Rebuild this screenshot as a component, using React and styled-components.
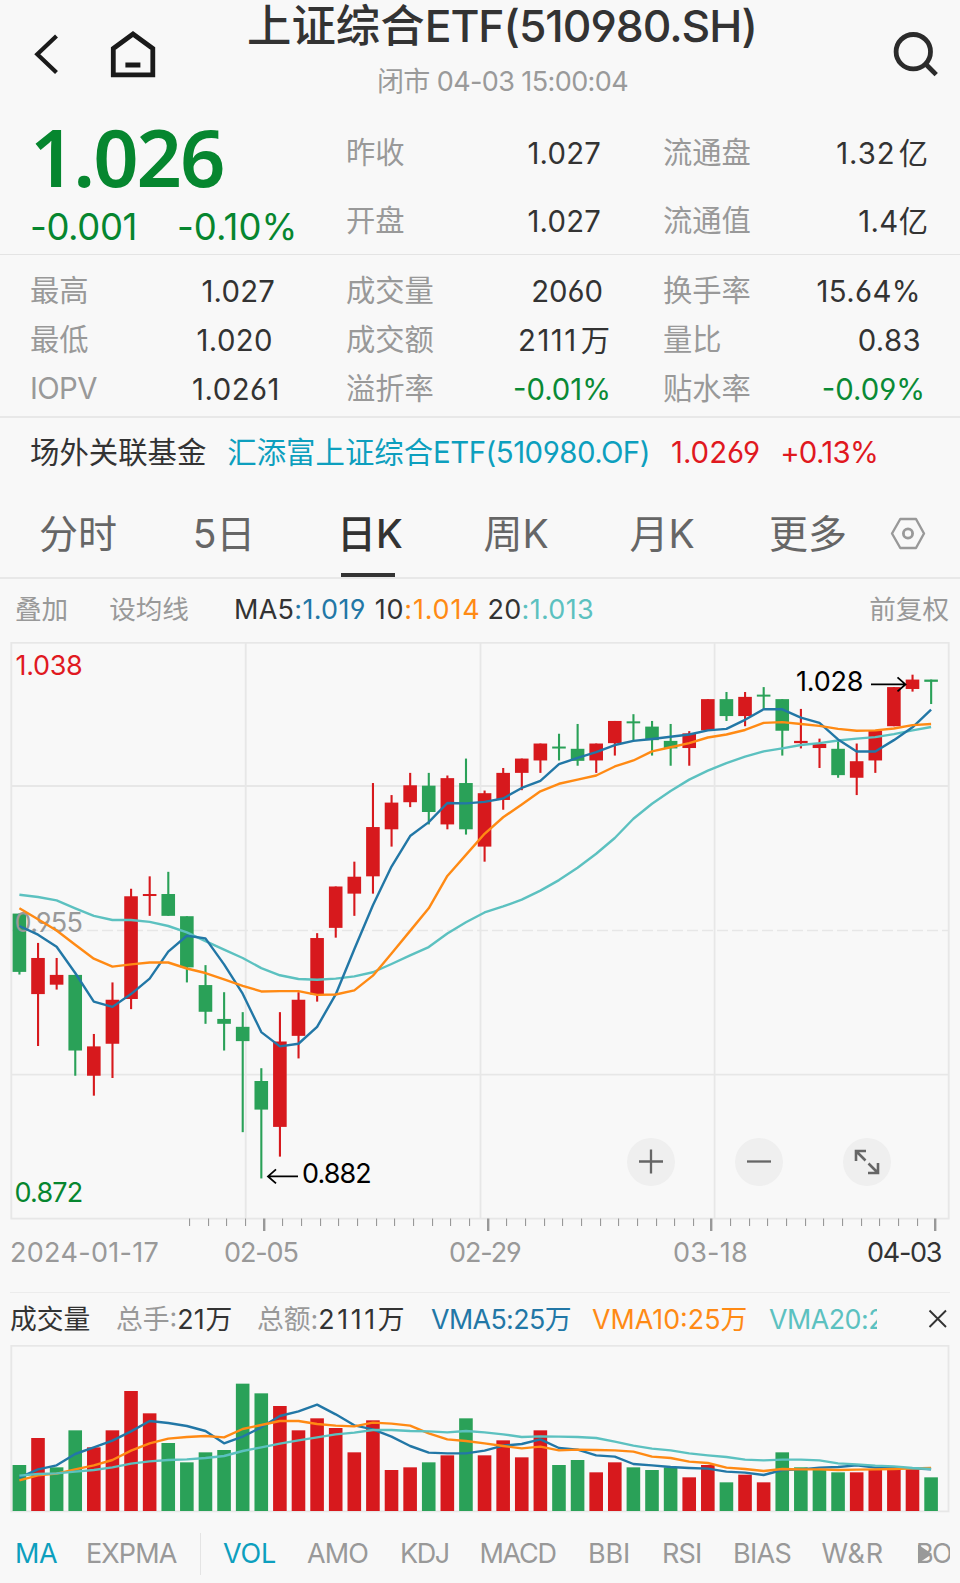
import React from "react";
import styled, { createGlobalStyle } from "styled-components";

const GlobalStyle = createGlobalStyle`
  body {
    margin: 0;
    background: #f8f8f8;
  }
`;

const RED = "#d7191d";
const GREEN = "#2aa158";
const BLUE = "#2277a6";
const ORANGE = "#ff8a14";
const CYAN = "#5cc1c0";

const Page = styled.div`
  width: 960px;
  height: 1583px;
  overflow: hidden;
  display: flex;
  flex-direction: column;
  background: #f8f8f8;
  color: #333;
  font-family: Inter, "Noto Sans CJK SC", sans-serif;
  font-feature-settings: "cv03", "cv04";
  white-space: nowrap;
`;

const Latin = styled.span`
  letter-spacing: ${(p) => p.$ls || 0}px;
  margin-right: ${(p) => p.$gap || 0}px;
  color: ${(p) => p.$color || "inherit"};
`;

/* header */
const Header = styled.header`
  height: 118px;
  flex: none;
  display: grid;
  grid-template-columns: 168px 1fr 128px;
`;

const HeaderLeft = styled.div`
  display: flex;
  gap: 49px;
  padding: 29px 0 0 33px;
`;

const HeaderRight = styled.div`
  padding: 28px 0 0 58px;
`;

const Titles = styled.div`
  display: flex;
  flex-direction: column;
  align-items: center;
`;

const Title = styled.h1`
  margin: 0 0 0 4px;
  font-size: 44.4px;
  font-weight: 500;
  line-height: 52px;
`;

const Subtitle = styled.div`
  margin-left: 5px;
  color: #9a9a9a;
  font-size: 27px;
  line-height: 60px;
  letter-spacing: -0.6px;
`;

/* quote */
const Quote = styled.section`
  height: 136px;
  flex: none;
  display: grid;
  grid-template-columns: 346px 317px 1fr;
  border-bottom: 1px solid #e4e4e4;
`;

const PriceBox = styled.div`
  color: #06862f;
  padding-left: 30px;
`;

const Price = styled.div`
  height: 81px;
  font-family: "Noto Sans", sans-serif;
  font-size: 79.5px;
  font-weight: 600;
  line-height: 76px;
  letter-spacing: -2.1px;
`;

const Change = styled.div`
  display: flex;
  gap: 40px;
  font-size: 36.5px;
  line-height: 56px;
`;

const QuoteColumn = styled.div`
  padding-top: 1px;
`;

const Stats = styled.section`
  height: 150px;
  flex: none;
  padding-top: 11px;
  display: grid;
  grid-template-columns: 316px 317px 1fr;
  align-content: start;
  padding-left: 30px;
  border-bottom: 2px solid #e8e8e8;
`;

const Cell = styled.div`
  height: ${(p) => p.$h || 49}px;
  line-height: ${(p) => p.$h || 49}px;
  display: flex;
  justify-content: space-between;
  padding-right: ${(p) => p.$end}px;
  font-size: 29.3px;
`;

const Label = styled.span`
  color: #999;
`;

const Value = styled.span`
  color: ${(p) => (p.$down ? "#0a8a35" : "#333")};
  padding-top: 1px;
`;

/* linked fund */
const Fund = styled.section`
  height: 70px;
  flex: none;
  display: flex;
  padding-left: 30px;
  font-size: 29.4px;
  line-height: 70px;
`;

const FundName = styled.span`
  color: #0d9fbe;
  margin: 0 21px 0 21px;
`;

const FundValue = styled.span`
  color: #e0191f;
  margin-right: 20px;
`;

/* period tabs */
const Tabs = styled.nav`
  height: 89px;
  flex: none;
  display: flex;
  padding: 0 0 0 5px;
  border-bottom: 2px solid #e8e8e8;
`;

const Tab = styled.div`
  width: 146px;
  height: 89px;
  box-sizing: border-box;
  padding-top: 3px;
  display: flex;
  flex-direction: column;
  align-items: center;
  justify-content: space-between;
  font-size: 39px;
  line-height: 86px;
  color: ${(p) => (p.$active ? "#333" : "#666")};
  font-weight: ${(p) => (p.$active ? 500 : 400)};
`;

const TabLine = styled.i`
  width: 54px;
  height: 4px;
  flex: none;
  margin: -4px 4px 0 0;
  background: #333;
`;

const TabSettings = styled.div`
  padding: 29px 0 0 9px;
`;

/* moving average bar */
const MaBar = styled.div`
  height: 63px;
  flex: none;
  display: flex;
  padding: 0 11px 0 15px;
  font-size: 26.6px;
  line-height: 61px;
`;

const MaTool = styled.span`
  color: #999;
  margin-right: ${(p) => p.$gap || 0}px;
`;

const MaValue = styled.span`
  margin-right: ${(p) => p.$gap || 0}px;
  font-size: 27px;
`;

const Push = styled.span`
  flex: 1;
`;

/* charts */
const ChartBox = styled.div`
  position: relative;
  height: 590px;
  flex: none;

  svg {
    display: block;
  }
`;

const ZoomButtons = styled.div`
  position: absolute;
  left: 626.5px;
  top: 496px;
  display: flex;
  gap: 60.4px;
`;

const ZoomButton = styled.button`
  width: 48px;
  height: 48px;
  padding: 0;
  border: 0;
  border-radius: 50%;
  background: #efefef;
  display: flex;
  align-items: center;
  justify-content: center;
`;

const Dates = styled.div`
  height: 60px;
  flex: none;
  display: flex;
  padding-left: 10px;
  font-size: 27px;
  line-height: 41px;
  color: #999;
`;

const DateLabel = styled.span`
  width: ${(p) => p.$w}px;
  letter-spacing: ${(p) => p.$ls}px;
  color: ${(p) => (p.$active ? "#333" : "inherit")};
`;

const VolumeHead = styled.div`
  height: 52px;
  flex: none;
  margin: 0 10px;
  border-top: 1px solid #ececec;
  display: flex;
  align-items: center;
  justify-content: space-between;
  font-size: 26.8px;
  line-height: 54px;
`;

const VolumeTexts = styled.div`
  display: flex;
  width: 867px;
  overflow: hidden;
`;

const VolumeText = styled.span`
  flex: none;
  width: ${(p) => p.$w}px;
  color: ${(p) => p.$color || "#333"};
`;

const VolumeBox = styled.div`
  height: 168px;
  flex: none;

  svg {
    display: block;
  }
`;

/* indicator picker */
const Indicators = styled.nav`
  height: 60px;
  flex: none;
  margin-right: 10px;
  padding: 10px 0 0 15px;
  display: flex;
  overflow: hidden;
  font-size: 27px;
  line-height: 62px;
`;

const Indicator = styled.span`
  flex: none;
  width: ${(p) => p.$w}px;
  letter-spacing: ${(p) => p.$ls}px;
  color: ${(p) => (p.$active ? "#0d9fbe" : "#999")};
`;

const IndicatorDivider = styled.i`
  flex: none;
  width: 1px;
  height: 42px;
  margin: 10px 22px 0 0;
  background: #e4e4e4;
`;

const MoreIndicators = styled.span`
  flex: none;
  width: 40px;
  display: flex;
  color: #999;
  letter-spacing: -1.6px;

  svg {
    flex: none;
    margin: 21px -18px 0 2.5px;
  }
`;

// x position of the n-th trading day
const dayX = (i) => 19.4 + i * 18.606;
const priceY = (v) => 0.7 + ((v - 7) * 576) / 1531;

// [up, body top, body bottom, high, low]
const CANDLES = [
  [0, 727, 882, 727, 889], [1, 845, 941, 805, 1079], [1, 890, 916, 845, 929], [0, 890, 1091, 890, 1158],
  [1, 1080, 1158, 1047, 1211], [1, 956, 1073, 910, 1164], [1, 681, 954, 661, 981], [1, 675, 680, 628, 733],
  [0, 675, 733, 616, 733], [0, 734, 870, 734, 910], [0, 917, 988, 864, 1020], [0, 1007, 1020, 936, 1091],
  [0, 1028, 1066, 989, 1308], [0, 1172, 1248, 1138, 1431], [1, 1067, 1294, 989, 1373], [1, 956, 1052, 936, 1112],
  [1, 792, 942, 779, 961], [1, 655, 765, 655, 791], [1, 629, 674, 589, 733], [1, 497, 628, 380, 674],
  [1, 432, 503, 412, 549], [1, 386, 431, 353, 444], [0, 387, 457, 353, 490], [1, 367, 490, 360, 503],
  [0, 380, 503, 315, 517], [1, 407, 549, 400, 589], [1, 353, 425, 340, 451], [1, 315, 353, 315, 399],
  [1, 275, 320, 275, 353], [0, 283, 288, 249, 320], [0, 289, 321, 223, 334], [1, 275, 320, 275, 353],
  [1, 215, 274, 215, 307], [0, 216, 221, 197, 266], [0, 230, 266, 215, 307], [0, 268, 288, 223, 334],
  [1, 248, 287, 242, 334], [1, 157, 240, 157, 240], [0, 157, 202, 138, 215], [1, 151, 202, 138, 229],
  [0, 145, 150, 125, 183], [0, 157, 241, 157, 307], [1, 268, 274, 183, 288], [1, 276, 287, 262, 340],
  [0, 289, 359, 268, 366], [1, 322, 366, 275, 412], [1, 241, 320, 241, 353], [1, 125, 229, 125, 229],
  [1, 105, 130, 92, 137], [0, 105, 111, 105, 170],
];

const MA5 = [
  760, 783, 815, 885, 961, 975, 941, 900, 828, 786, 793, 862, 940, 1042, 1080, 1073, 1028, 942, 822, 705, 602, 521,
  484, 433, 434, 430, 421, 393, 374, 330, 313, 298, 279, 268, 263, 257, 251, 240, 236, 212, 184, 184, 206, 220, 264,
  296, 296, 266, 232, 185,
];
const MA10 = [
  713, 742, 772, 810, 847, 868, 862, 857, 857, 873, 885, 902, 919, 934, 933, 933, 943, 942, 931, 892, 833, 773, 713,
  627, 571, 515, 471, 437, 402, 382, 371, 360, 336, 320, 296, 285, 274, 259, 251, 239, 220, 218, 223, 228, 236, 241,
  240, 235, 226, 223,
];
const MA20 = [
  677, 683, 692, 713, 733, 744, 744, 749, 760, 777, 800, 823, 845, 872, 891, 901, 903, 900, 894, 883, 861, 838, 816,
  780, 750, 724, 708, 690, 666, 638, 605, 568, 526, 475, 435, 401, 371, 347, 327, 310, 296, 288, 279, 274, 267, 262,
  258, 250, 240, 231,
];

// volumes use a 500 unit high panel, counted from the top border
const volumeY = (v) => (v - 435) / 3;
const VOLUMES = [
  795, 714, 802, 691, 742, 691, 573, 640, 729, 787, 757, 750, 551, 580, 618, 691, 655, 684, 757, 661, 810, 802, 787,
  766, 655, 766, 721, 772, 691, 795, 780, 817, 787, 802, 810, 802, 832, 795, 847, 824, 847, 757, 802, 808, 817, 817,
  808, 806, 808, 832,
];
// r = up, g = down
const VOLUME_COLORS = "grggrrrrggggggrrrrrrrrgrgrrrrggrrgggrrgrrggggrrrrg";
const VMA5 = [
  833, 808, 796, 762, 742, 722, 694, 663, 669, 678, 693, 730, 710, 682, 648, 634, 614, 643, 676, 688, 710, 738, 758,
  760, 760, 752, 737, 732, 718, 744, 749, 766, 770, 792, 796, 801, 804, 806, 815, 818, 825, 810, 808, 803, 801, 796,
  803, 803, 805, 808,
];
const VMA10 = [
  841, 826, 821, 808, 796, 780, 752, 730, 716, 711, 708, 712, 687, 675, 663, 663, 672, 677, 679, 668, 671, 677, 700,
  718, 723, 730, 738, 745, 740, 751, 749, 750, 751, 755, 770, 774, 785, 789, 803, 807, 813, 807, 808, 808, 810, 809,
  808, 807, 805, 804,
];
const VMA20 = [
  827, 822, 820, 815, 810, 802, 791, 784, 780, 778, 774, 768, 753, 742, 731, 721, 712, 703, 698, 690, 690, 693, 694,
  697, 693, 697, 703, 711, 709, 710, 711, 714, 725, 737, 746, 751, 760, 766, 771, 779, 781, 779, 779, 781, 790, 793,
  797, 799, 804, 807,
];

const INDICATORS = [
  { name: "VOL", w: 84, ls: -0.2, active: true },
  { name: "AMO", w: 93, ls: -0.9 },
  { name: "KDJ", w: 79.5, ls: -1.5 },
  { name: "MACD", w: 108.5, ls: -1.3 },
  { name: "BBI", w: 74, ls: -0.2 },
  { name: "RSI", w: 71, ls: -0.9 },
  { name: "BIAS", w: 88.5, ls: -0.7 },
  { name: "W&R", w: 94, ls: 0.8 },
];

const Line = ({ data, y, color }) => (
  <polyline
    points={data.map((v, i) => `${dayX(i)},${y(v)}`).join(" ")}
    fill="none"
    stroke={color}
    strokeWidth="2.4"
    strokeLinejoin="round"
  />
);

const Candle = ({ i, data: [up, top, bottom, high, low] }) => {
  const x = dayX(i);
  const fill = up ? RED : GREEN;
  return (
    <g fill={fill}>
      <rect x={x - 1} y={priceY(high)} width="2.1" height={priceY(low) - priceY(high)} />
      <rect x={x - 6.8} y={priceY(top)} width="13.6" height={Math.max(priceY(bottom) - priceY(top), 2)} />
    </g>
  );
};

const PriceChart = () => (
  <svg width="960" height="590" fontSize="27">
    <g stroke="#e7e7e7" strokeWidth="1.8" fill="none">
      <rect x="11.3" y="0.8" width="937.4" height="575.8" />
      <path d="M12 144H948M12 432.6H948M245.7 1V576M480.5 1V576M714.6 1V576" />
      <path d="M12 288.5H948" strokeDasharray="11 4" strokeWidth="1.4" />
    </g>
    {CANDLES.map((c, i) => (
      <Candle key={i} i={i} data={c} />
    ))}
    <text x="14.5" y="289.5" fill="#999" letterSpacing="-0.7">0.955</text>
    <Line data={MA20} y={priceY} color={CYAN} />
    <Line data={MA5} y={priceY} color={BLUE} />
    <Line data={MA10} y={priceY} color={ORANGE} />
    <text x="15.5" y="32.5" fill="#e0191f" letterSpacing="-0.3">1.038</text>
    <text x="14.5" y="560" fill="#06862f" letterSpacing="-0.8">0.872</text>
    <text x="302" y="540.5" fill="#000" letterSpacing="-0.9">0.882</text>
    <text x="796" y="48.5" fill="#000" letterSpacing="-0.2">1.028</text>
    <g stroke="#000" strokeWidth="1.8" fill="none">
      <path d="M298 534.4H268M276 527.4L268 534.4L276 541.4" />
      <path d="M871 42.4H905M897.5 35.4L905.5 42.4L897.5 49.4" />
    </g>
    {Array.from({ length: 41 }, (_, i) => {
      const major = i % 12 === 4;
      return (
        <rect
          key={i}
          x={Math.round(189 + i * 18.66) - (major ? 1 : 0)}
          y="576.5"
          width={major ? 2.4 : 1.1}
          height={major ? 12.5 : 7.5}
          fill="#999"
        />
      );
    })}
  </svg>
);

const VolumeChart = () => (
  <svg width="960" height="168">
    <rect x="11.3" y="0.8" width="937.2" height="165.6" fill="none" stroke="#e7e7e7" strokeWidth="1.8" />
    {VOLUMES.map((v, i) => (
      <rect
        key={i}
        x={dayX(i) - 6.8}
        y={volumeY(v)}
        width="13.6"
        height={166 - volumeY(v)}
        fill={VOLUME_COLORS[i] === "r" ? RED : GREEN}
      />
    ))}
    <Line data={VMA5} y={volumeY} color={BLUE} />
    <Line data={VMA10} y={volumeY} color={ORANGE} />
    <Line data={VMA20} y={volumeY} color={CYAN} />
  </svg>
);

export default function App() {
  return (
    <>
      <GlobalStyle />
      <Page>
        <Header>
          <HeaderLeft>
            <svg width="28" height="50" fill="none" stroke="#1a1a1a" strokeWidth="4.2">
              <path d="M23.5 7L4.3 25.3L23.5 43.5" />
            </svg>
            <svg width="46" height="50" fill="none" stroke="#1a1a1a" strokeWidth="4.8">
              <path d="M3.3 45.9V19.5L23 5L42.8 19.5V45.9ZM15.4 36H30.4" />
            </svg>
          </HeaderLeft>
          <Titles>
            <Title>
              上证综合<Latin $ls={-1}>ETF(510980.SH)</Latin>
            </Title>
            <Subtitle>闭市 04-03 15:00:04</Subtitle>
          </Titles>
          <HeaderRight>
            <svg width="50" height="50" fill="none" stroke="#2b2b2b" strokeWidth="4.8">
              <circle cx="23.3" cy="23.7" r="17.2" />
              <path d="M35.6 36L46.2 46.6" />
            </svg>
          </HeaderRight>
        </Header>

        <Quote>
          <PriceBox>
            <Price>1.026</Price>
            <Change>
              <Latin $ls={-0.4}>-0.001</Latin>
              <Latin $ls={0.1}>-0.10%</Latin>
            </Change>
          </PriceBox>
          <QuoteColumn>
            <Cell $h={68} $end={62}>
              <Label>昨收</Label>
              <Value><Latin $ls={0.2}>1.027</Latin></Value>
            </Cell>
            <Cell $h={68} $end={62}>
              <Label>开盘</Label>
              <Value><Latin $ls={0.2}>1.027</Latin></Value>
            </Cell>
          </QuoteColumn>
          <QuoteColumn>
            <Cell $h={68} $end={32}>
              <Label>流通盘</Label>
              <Value><Latin $ls={1} $gap={3}>1.32</Latin>亿</Value>
            </Cell>
            <Cell $h={68} $end={32}>
              <Label>流通值</Label>
              <Value><Latin $ls={0.4}>1.4</Latin>亿</Value>
            </Cell>
          </QuoteColumn>
        </Quote>

        <Stats>
          <Cell $end={71}>
            <Label>最高</Label>
            <Value><Latin $ls={0.2}>1.027</Latin></Value>
          </Cell>
          <Cell $end={60}>
            <Label>成交量</Label>
            <Value>2060</Value>
          </Cell>
          <Cell $end={39}>
            <Label>换手率</Label>
            <Value><Latin $ls={0.4}>15.64%</Latin></Value>
          </Cell>
          <Cell $end={73}>
            <Label>最低</Label>
            <Value><Latin $ls={0.4}>1.020</Latin></Value>
          </Cell>
          <Cell $end={53}>
            <Label>成交额</Label>
            <Value><Latin $ls={1.5} $gap={3}>2111</Latin>万</Value>
          </Cell>
          <Cell $end={39}>
            <Label>量比</Label>
            <Value><Latin $ls={0.4}>0.83</Latin></Value>
          </Cell>
          <Cell $end={66}>
            <Label><Latin $ls={-0.6}>IOPV</Latin></Label>
            <Value><Latin $ls={0.5}>1.0261</Latin></Value>
          </Cell>
          <Cell $end={52}>
            <Label>溢折率</Label>
            <Value $down>-0.01%</Value>
          </Cell>
          <Cell $end={35}>
            <Label>贴水率</Label>
            <Value $down>-0.09%</Value>
          </Cell>
        </Stats>

        <Fund>
          场外关联基金
          <FundName>
            汇添富上证综合<Latin $ls={-0.5}>ETF(510980.OF)</Latin>
          </FundName>
          <FundValue>1.0269</FundValue>
          <FundValue><Latin $ls={-0.7}>+0.13%</Latin></FundValue>
        </Fund>

        <Tabs>
          <Tab>分时</Tab>
          <Tab>5日</Tab>
          <Tab $active>
            日K
            <TabLine />
          </Tab>
          <Tab>周K</Tab>
          <Tab>月K</Tab>
          <Tab>更多</Tab>
          <TabSettings>
            <svg width="36" height="34" fill="none" stroke="#999" strokeWidth="2.4">
              <path d="M10.3 2H26L34 16.5L26 31H10.3L2 16.5Z" strokeLinejoin="round" />
              <circle cx="18" cy="16.5" r="4.6" strokeWidth="2.8" />
            </svg>
          </TabSettings>
        </Tabs>

        <MaBar>
          <MaTool $gap={41}>叠加</MaTool>
          <MaTool $gap={45}>设均线</MaTool>
          <MaValue $gap={9}>
            <Latin $ls={0.3}>
              MA5<Latin $ls={0.3} $color={BLUE}>:1.019</Latin>
            </Latin>
          </MaValue>
          <MaValue $gap={7}>
            <Latin $ls={0.8}>
              10<Latin $ls={0.8} $color={ORANGE}>:1.014</Latin>
            </Latin>
          </MaValue>
          <MaValue>
            <Latin $ls={0.3}>
              20<Latin $ls={0.3} $color={CYAN}>:1.013</Latin>
            </Latin>
          </MaValue>
          <Push />
          <MaTool>前复权</MaTool>
        </MaBar>

        <ChartBox>
          <PriceChart />
          <ZoomButtons>
            <ZoomButton>
              <svg width="26" height="26" stroke="#666" strokeWidth="2.3">
                <path d="M1 12.5H25M13 0.5V24.5" />
              </svg>
            </ZoomButton>
            <ZoomButton>
              <svg width="26" height="26" stroke="#666" strokeWidth="2.3">
                <path d="M1 12.5H25" />
              </svg>
            </ZoomButton>
            <ZoomButton>
              <svg width="26" height="26" fill="none" stroke="#666" strokeWidth="2.6">
                <path d="M12 2H2V12M2 2L11.5 11.5M14 24H24V14M24 24L14.5 14.5" />
              </svg>
            </ZoomButton>
          </ZoomButtons>
        </ChartBox>

        <Dates>
          <DateLabel $w={214} $ls={0.3}>2024-01-17</DateLabel>
          <DateLabel $w={225} $ls={-1.1}>02-05</DateLabel>
          <DateLabel $w={224} $ls={-1.1}>02-29</DateLabel>
          <DateLabel $w={194} $ls={0.2}>03-18</DateLabel>
          <DateLabel $ls={-1.3} $active>04-03</DateLabel>
        </Dates>

        <VolumeHead>
          <VolumeTexts>
            <VolumeText $w={106}>成交量</VolumeText>
            <VolumeText $w={141}>
              <Label>总手:</Label><Latin $gap={1}>21</Latin>万
            </VolumeText>
            <VolumeText $w={174}>
              <Label>总额:</Label><Latin $ls={2.6}>2111</Latin>万
            </VolumeText>
            <VolumeText $w={161} $color={BLUE}>
              <Latin $ls={-0.6}>VMA5:25</Latin>万
            </VolumeText>
            <VolumeText $w={177} $color={ORANGE}>VMA10:25万</VolumeText>
            <VolumeText $color={CYAN}><Latin $ls={-0.5}>VMA20:25</Latin>万</VolumeText>
          </VolumeTexts>
          <svg width="22" height="20" stroke="#333" strokeWidth="1.9">
            <path d="M1.5 1.5L18 18M18 1.5L1.5 18" />
          </svg>
        </VolumeHead>
        <VolumeBox>
          <VolumeChart />
        </VolumeBox>

        <Indicators>
          <Indicator $w={71} $ls={-0.5} $active>MA</Indicator>
          <Indicator $w={114} $ls={-0.9}>EXPMA</Indicator>
          <IndicatorDivider />
          {INDICATORS.map((it) => (
            <Indicator key={it.name} $w={it.w} $ls={it.ls} $active={it.active}>
              {it.name}
            </Indicator>
          ))}
          <MoreIndicators>
            <svg width="16" height="20" fill="#999">
              <path d="M0 0.5L14 10L0 19.5Z" />
            </svg>
            BOLL
          </MoreIndicators>
        </Indicators>
      </Page>
    </>
  );
}
